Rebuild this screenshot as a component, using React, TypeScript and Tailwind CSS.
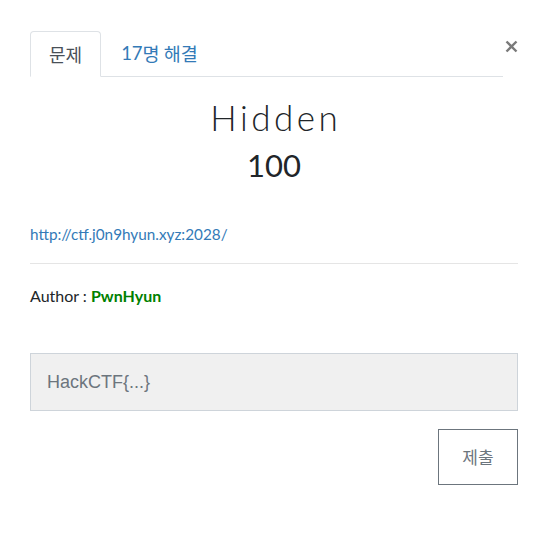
export default function App() {
  return (
    <div className="w-[548px] h-[537px] bg-white font-['Lato','Noto_Sans_CJK_KR',sans-serif] text-[#212529]">
      <div className="px-[30px] pt-[31px]">
        <div className="flex items-start">
          <div className="flex flex-1 border-b border-[#dee2e6]">
            <div className="-mb-px border border-[#dee2e6] border-b-white rounded-t-[4px] bg-white px-[18px] h-[46px] flex items-center text-[18px] text-[#495057] font-['Noto_Sans_CJK_KR',sans-serif]">
              문제
            </div>
            <div className="px-[20px] h-[45px] flex items-center text-[18.5px] text-[#337ab7]">
              17<span className="font-['Noto_Sans_CJK_KR',sans-serif]">명 해결</span>
            </div>
          </div>
          <button className="w-[15px] h-[46px] flex items-center justify-end">
            <svg width="13" height="13" viewBox="0 0 13 13" className="mt-[-16px]">
              <path d="M1.5 1.5 L11.5 11.5 M11.5 1.5 L1.5 11.5" stroke="#7a7a7a" strokeWidth="2.4" strokeLinecap="butt" />
            </svg>
          </button>
        </div>
        <h1 className="mt-[20px] text-center text-[35px] leading-[40px] font-light tracking-[3.5px] pl-[3.5px] text-[#212529]">
          Hidden
        </h1>
        <div className="mt-[8px] text-center text-[31px] leading-[40px] font-normal text-[#212529]">100</div>
        <div className="mt-[37px] text-[15.3px] leading-[24px]">
          <a className="text-[#337ab7]">http://ctf.j0n9hyun.xyz:2028/</a>
        </div>
        <div className="mt-[17px] h-px bg-[#e5e5e5]" />
        <div className="mt-[20px] text-[16px] leading-[24px] text-[#212529]">
          Author : <span className="font-bold text-[#008000]">PwnHyun</span>
        </div>
        <div className="mt-[45px] h-[58px] border border-[#ced4da] bg-[#f0f0f0] flex items-center px-[16px] font-['Liberation_Sans',sans-serif] text-[18px] text-[#6c757d]">
          HackCTF{"{...}"}
        </div>
        <div className="mt-[18px] flex justify-end">
          <button className="w-[80px] h-[56px] border border-[#6c757d] bg-white text-[17px] text-[#6c757d] font-['Noto_Sans_CJK_KR',sans-serif]">
            제출
          </button>
        </div>
      </div>
    </div>
  );
}
